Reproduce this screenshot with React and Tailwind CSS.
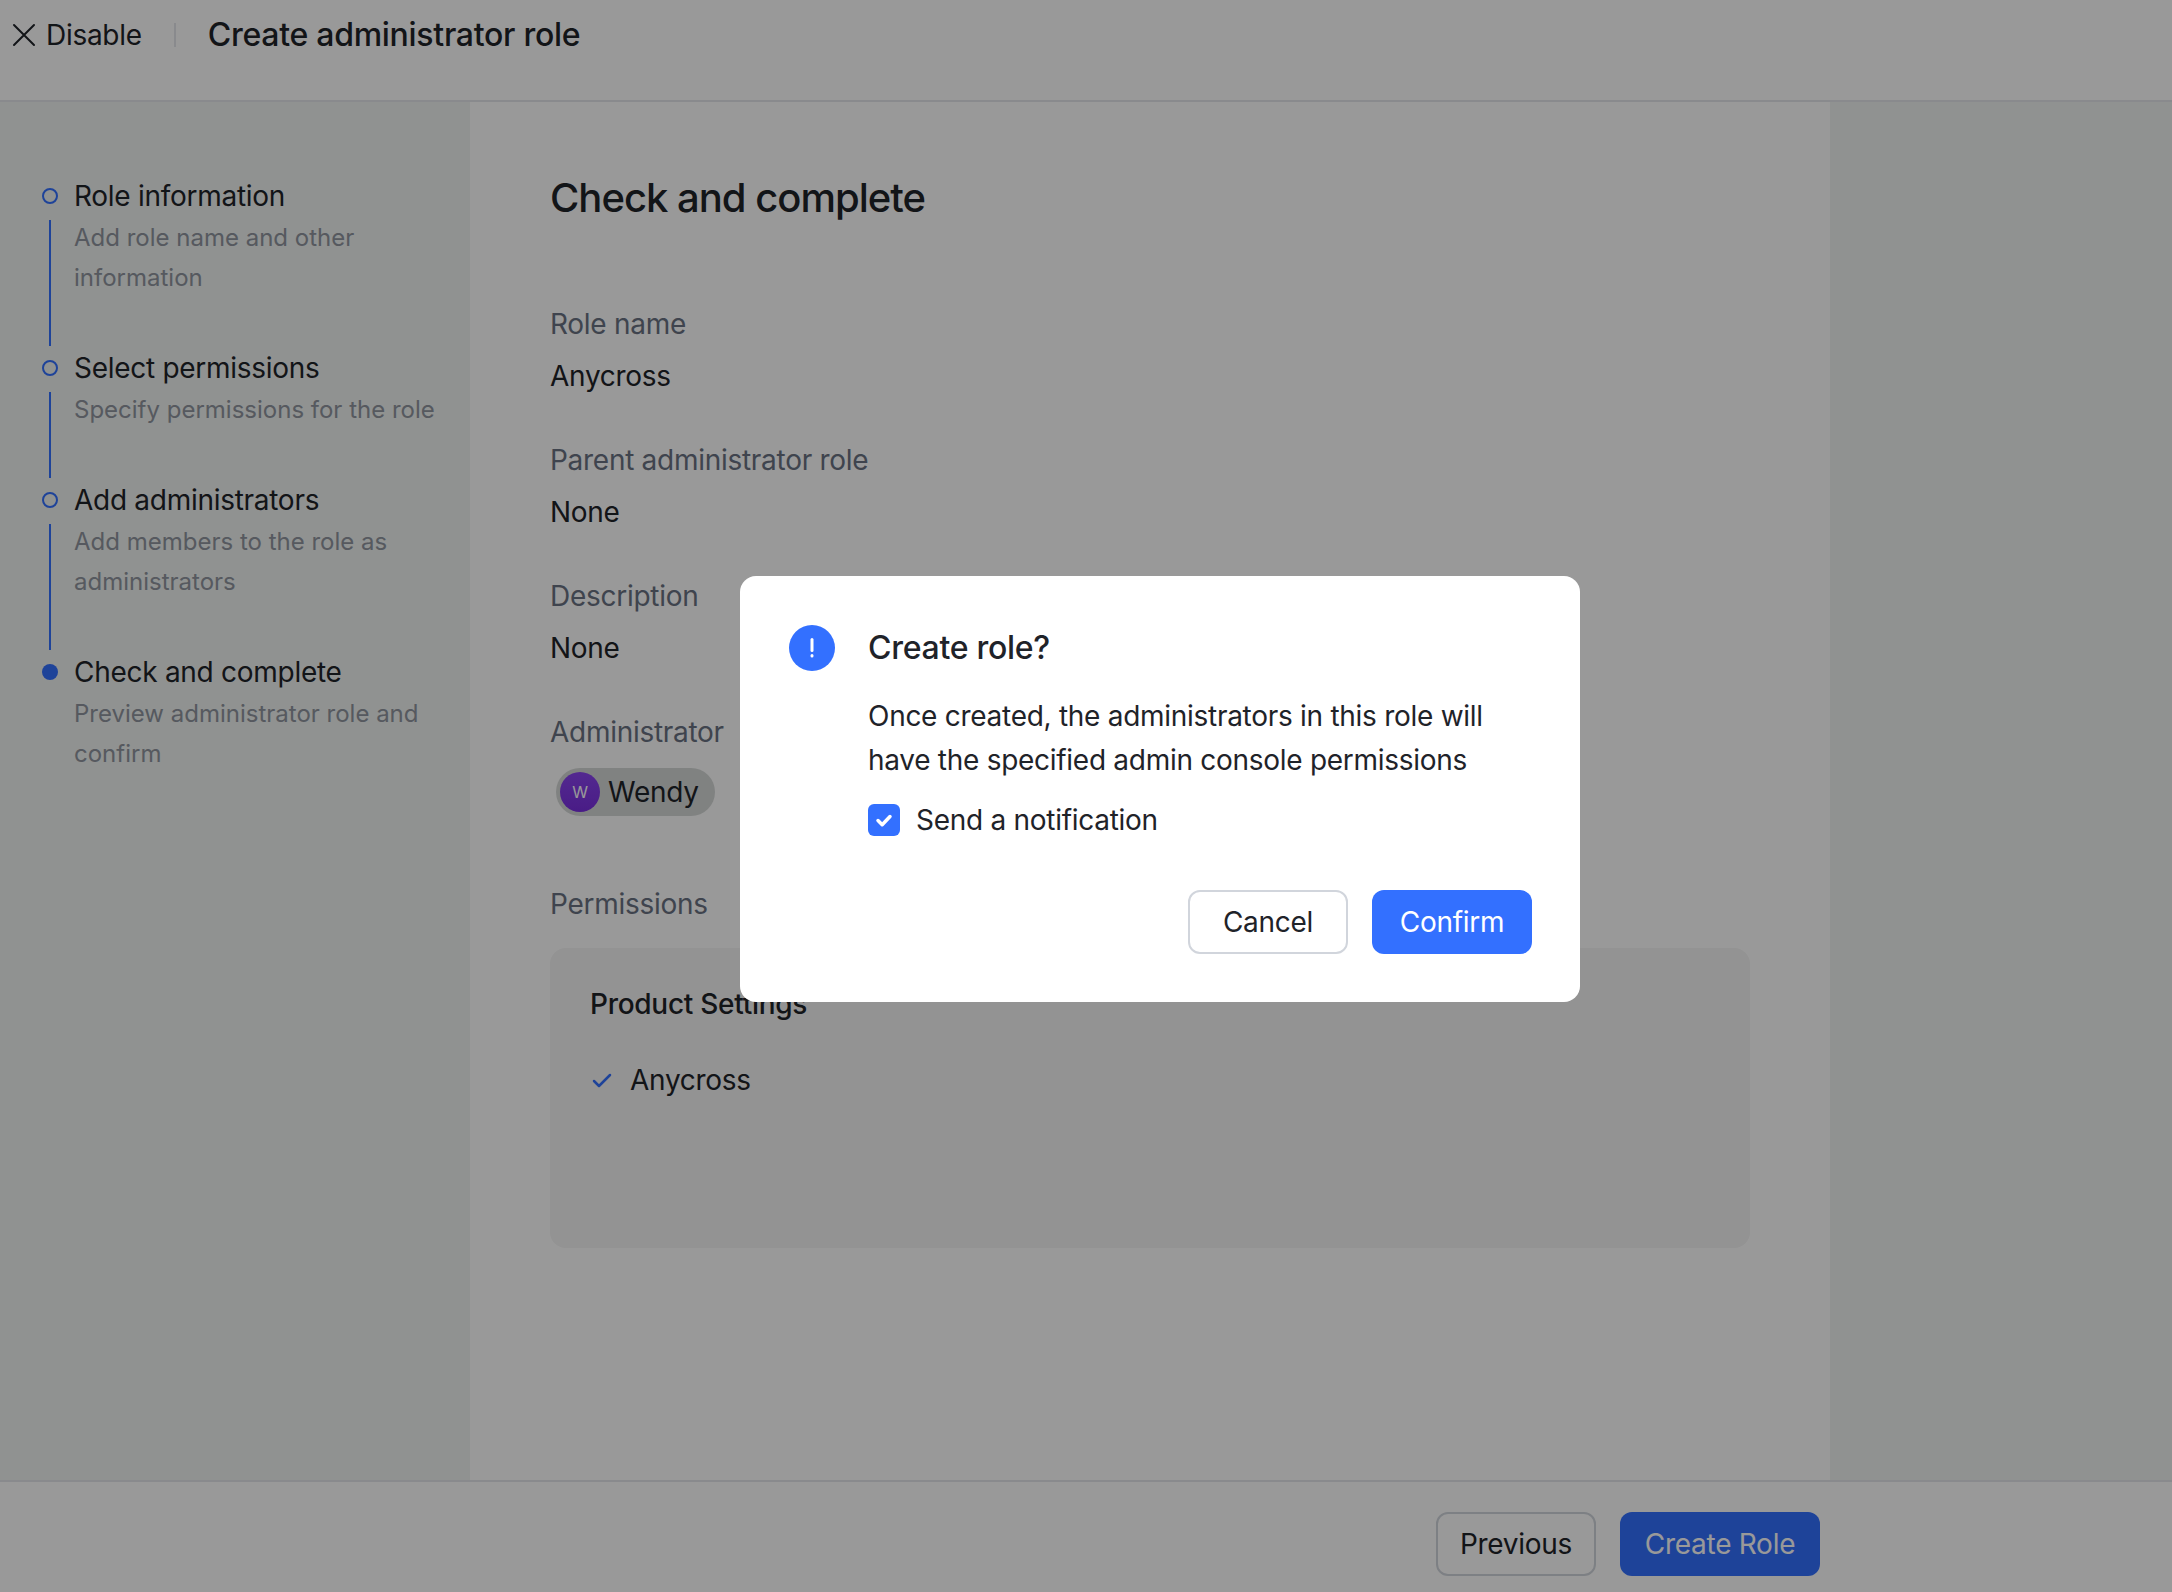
const steps = [
    { title: 'Role information', desc: 'Add role name and other information' },
    { title: 'Select permissions', desc: 'Specify permissions for the role' },
    { title: 'Add administrators', desc: 'Add members to the role as administrators' },
    { title: 'Check and complete', desc: 'Preview administrator role and confirm', current: true },
];

const fields = [
    { label: 'Role name', value: 'Anycross' },
    { label: 'Parent administrator role', value: 'None' },
    { label: 'Description', value: 'None' },
];

function Field({ label, value }) {
    return (
        <div className="mb-11">
            <div className="leading-10 text-gray-500">{label}</div>
            <div className="mt-3 leading-10">{value}</div>
        </div>
    );
}

function Sidebar() {
    return (
        <aside className="w-[470px] shrink-0 bg-[#f0f3f2] pt-18.5 pr-8 pl-10">
            {steps.map((step, index) => (
                <div key={step.title} className="flex gap-3.5">
                    <div className="flex w-5 shrink-0 flex-col items-center pt-3">
                        {step.current ? (
                            <div className="h-4 w-4 rounded-full bg-[#3370ff]" />
                        ) : (
                            <div className="h-4 w-4 rounded-full border-2 border-[#3370ff]" />
                        )}
                        {index < steps.length - 1 && <div className="mt-4 mb-0.5 w-0.5 flex-1 bg-[#3370ff]" />}
                    </div>
                    <div className="flex-1 pb-12.5">
                        <div className="leading-10">{step.title}</div>
                        <div className="mt-0.5 text-2xl leading-10 tracking-normal text-[#8f959e]">{step.desc}</div>
                    </div>
                </div>
            ))}
        </aside>
    );
}

function ConfirmModal() {
    return (
        <div className="absolute top-144 left-185 w-210 rounded-2xl bg-white p-12">
            <div className="flex h-12 items-center gap-8">
                <svg viewBox="0 0 48 48" className="h-12 w-12 shrink-0">
                    <circle cx="24" cy="24" r="23" fill="#3370ff" />
                    <rect x="22.5" y="14" width="3" height="14" rx="1.5" fill="#fff" />
                    <rect x="22.5" y="30" width="3" height="3.5" rx="1.5" fill="#fff" />
                </svg>
                <div className="text-[32px] font-medium">Create role?</div>
            </div>
            <div className="pl-20">
                <p className="mt-5.5 leading-11">
                    Once created, the administrators in this role will have the specified admin console permissions
                </p>
                <div className="mt-5.5 flex h-8 items-center gap-4">
                    <div className="flex h-8 w-8 items-center justify-center rounded-md bg-[#3370ff]">
                        <svg viewBox="0 0 24 24" className="h-6 w-6" fill="none" stroke="#fff" strokeWidth="3.5" strokeLinecap="round" strokeLinejoin="round">
                            <path d="M6 12.5l4.2 4.2L18 8.5" />
                        </svg>
                    </div>
                    <span>Send a notification</span>
                </div>
            </div>
            <div className="mt-13.5 flex justify-end gap-6">
                <button className="h-16 w-40 rounded-xl border-2 border-gray-300 bg-white">Cancel</button>
                <button className="h-16 w-40 rounded-xl bg-[#3370ff] text-white">Confirm</button>
            </div>
        </div>
    );
}

export default function App() {
    return (
        <div className="relative flex h-screen w-screen flex-col overflow-hidden bg-white font-['Inter',sans-serif] text-[28px] tracking-[-0.01em] text-[#1f2329]">
            <header className="flex h-25 shrink-0">
                <div className="flex h-17.5 items-center pl-3">
                    <svg viewBox="0 0 24 24" className="h-6 w-6" fill="none" stroke="currentColor" strokeWidth="2" strokeLinecap="round">
                        <path d="M2 2l20 20M22 2L2 22" />
                    </svg>
                    <span className="ml-2.5">Disable</span>
                    <div className="mx-8 h-6 w-0.5 bg-gray-200" />
                    <h1 className="text-[32px] font-medium">Create administrator role</h1>
                </div>
            </header>

            <div className="flex min-h-0 flex-1 border-t-2 border-gray-200">
                <Sidebar />
                <main className="w-340 px-20 pt-16.5">
                    <h2 className="mb-19 text-[40px] leading-15 font-medium tracking-tight">Check and complete</h2>
                    {fields.map((field) => (
                        <Field key={field.label} label={field.label} value={field.value} />
                    ))}
                    <div className="leading-10 text-gray-500">Administrator</div>
                    <div className="mt-4 mb-17 ml-1.5 flex h-12 w-fit items-center gap-2 rounded-full bg-[#d6d9d8] pr-4 pl-1">
                        <div className="flex h-10 w-10 items-center justify-center rounded-full bg-gradient-to-b from-[#8b45f0] to-[#7a2ee0] text-base text-white">
                            W
                        </div>
                        <span>Wendy</span>
                    </div>
                    <div className="leading-10 text-gray-500">Permissions</div>
                    <div className="mt-6 h-75 rounded-2xl bg-neutral-100 p-10 pt-9">
                        <div className="leading-10 font-medium">Product Settings</div>
                        <div className="mt-9 flex items-center gap-4">
                            <svg viewBox="0 0 24 24" className="h-6 w-6" fill="none" stroke="#3370ff" strokeWidth="2.5" strokeLinecap="round" strokeLinejoin="round">
                                <path d="M4 13l5 5L20 7" />
                            </svg>
                            <span className="leading-10">Anycross</span>
                        </div>
                    </div>
                </main>
                <div className="flex-1 bg-[#f0f3f2]" />
            </div>

            <footer className="flex h-28 shrink-0 items-start justify-end gap-6 border-t-2 border-gray-200 pt-7.5 pr-88">
                <button className="h-16 w-40 rounded-xl border-2 border-gray-300 bg-white">Previous</button>
                <button className="h-16 w-50 rounded-xl bg-[#3370ff] text-white">Create Role</button>
            </footer>

            <div className="absolute inset-0 bg-black/40" />
            <ConfirmModal />
        </div>
    );
}
